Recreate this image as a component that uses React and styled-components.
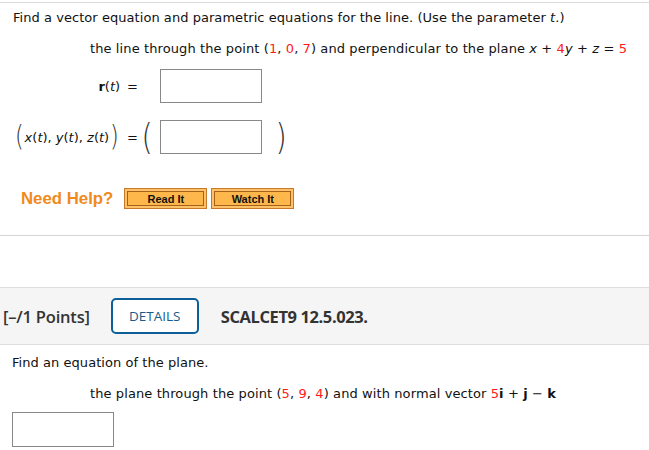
import React from "react";
import styled, { createGlobalStyle } from "styled-components";

const GlobalStyle = createGlobalStyle`
  html, body {
    margin: 0;
    padding: 0;
    background: #ffffff;
  }
  body {
    font-family: "DejaVu Sans", Verdana, sans-serif;
    font-size: 13px;
    color: #111;
  }
`;

const Page = styled.div`
  width: 649px;
  height: 450px;
  overflow: hidden;
  padding-top: 2px;
  box-sizing: border-box;
`;

const QuestionBody = styled.div`
  border-top: 1px solid #dcdcdc;
  padding: 7px 0 0 13px;
`;

const Prompt = styled.div`
  line-height: 16px;
  white-space: nowrap;
  letter-spacing: 0.05px;
`;

const Statement = styled.div`
  line-height: 16px;
  white-space: nowrap;
  letter-spacing: 0.1px;
  padding-left: ${(p) => p.$indent || 77}px;
  margin-top: ${(p) => p.$top || 15}px;
`;

const Red = styled.span`
  color: #ff1a1a;
`;

const Var = styled.i`
  font-style: italic;
`;

const Bold = styled.b`
  font-weight: bold;
`;

const AnswerGrid = styled.div`
  display: grid;
  grid-template-columns: 125px 22px auto;
  align-items: center;
  margin-top: 12px;
  row-gap: 14px;
`;

const Label = styled.div`
  display: flex;
  align-items: center;
  justify-content: flex-end;
  white-space: nowrap;
  height: ${(p) => p.$h || 34}px;
`;

const BigParen = styled.span`
  display: inline-block;
  font-family: "DejaVu Sans", sans-serif;
  font-weight: 200;
  font-size: ${(p) => p.$size || 26}px;
  line-height: 1;
  color: #333;
  transform: scaleX(0.8);
`;

const Equals = styled.span`
  margin-left: 7px;
`;

const OpenCell = styled.div`
  display: flex;
  align-items: center;
  justify-content: flex-end;
  padding-right: 6px;
`;

const ContentCell = styled.div`
  display: flex;
  align-items: center;
  gap: 12px;
`;

const AnswerBox = styled.div`
  width: ${(p) => p.$w || 100}px;
  height: ${(p) => p.$h || 32}px;
  margin-top: ${(p) => p.$top || 0}px;
  border: 1px solid #888;
  background: #fff;
`;

const HelpRow = styled.div`
  display: flex;
  align-items: center;
  gap: 4px;
  margin-top: 31px;
  padding-left: 8px;
`;

const HelpText = styled.span`
  font-family: "Liberation Sans", Arial, sans-serif;
  font-weight: bold;
  font-size: 16.8px;
  color: #f08a1c;
  margin-right: 7px;
`;

const HelpButton = styled.button`
  width: 83px;
  height: 21px;
  padding: 0;
  border: 1px solid #c9782a;
  background: #fdb74a;
  box-shadow: inset 0 0 0 2px #fdc266, inset 0 0 0 3px #a8611c;
  font-family: "Liberation Sans", Arial, sans-serif;
  font-weight: bold;
  font-size: 11px;
  color: #111;
  cursor: pointer;
`;

const Rule = styled.div`
  border-top: 1px solid #d4d4d4;
  margin-top: 26px;
`;

const HeaderBand = styled.div`
  margin-top: 51px;
  height: 56px;
  background: #f5f5f5;
  border-top: 1px solid #dedede;
  border-bottom: 1px solid #dedede;
  display: flex;
  align-items: center;
  padding-left: 3px;
  font-family: "Open Sans", "Noto Sans", sans-serif;
  color: #333;
`;

const Points = styled.span`
  font-weight: 600;
  font-size: 16.5px;
  letter-spacing: -0.2px;
  margin-right: 21px;
`;

const DetailsButton = styled.button`
  width: 88px;
  height: 36px;
  border: 2px solid #0c5f98;
  border-radius: 5px;
  background: #fff;
  font-family: "Open Sans", "Noto Sans", sans-serif;
  font-size: 13.5px;
  color: #1b5b8a;
  padding: 0;
  margin-right: 22px;
`;

const Code = styled.span`
  font-weight: 700;
  font-size: 16.5px;
  letter-spacing: -0.4px;
`;

const Question2 = styled.div`
  padding: 10px 0 0 12px;
`;

export default function App() {
  return (
    <Page>
      <GlobalStyle />
      <QuestionBody>
        <Prompt>
          Find a vector equation and parametric equations for the line. (Use
          the parameter <Var>t</Var>.)
        </Prompt>
        <Statement>
          the line through the point (<Red>1</Red>, <Red>0</Red>,{" "}
          <Red>7</Red>) and perpendicular to the plane <Var>x</Var> +{" "}
          <Red>4</Red>
          <Var>y</Var> + <Var>z</Var> = <Red>5</Red>
        </Statement>

        <AnswerGrid>
          <Label>
            <Bold>r</Bold>(<Var>t</Var>)<Equals>=</Equals>
          </Label>
          <div />
          <ContentCell>
            <AnswerBox $w={100} $h={32} />
          </ContentCell>

          <Label $h={40}>
            <BigParen $size={28}>(</BigParen>
            <Var>x</Var>(<Var>t</Var>),&nbsp;<Var>y</Var>(<Var>t</Var>),&nbsp;
            <Var>z</Var>(<Var>t</Var>)<BigParen $size={28}>)</BigParen>
            <Equals>=</Equals>
          </Label>
          <OpenCell>
            <BigParen $size={36}>(</BigParen>
          </OpenCell>
          <ContentCell>
            <AnswerBox $w={100} $h={32} />
            <BigParen $size={36}>)</BigParen>
          </ContentCell>
        </AnswerGrid>

        <HelpRow>
          <HelpText>Need Help?</HelpText>
          <HelpButton>Read It</HelpButton>
          <HelpButton>Watch It</HelpButton>
        </HelpRow>
      </QuestionBody>

      <Rule />

      <HeaderBand>
        <Points>[–/1 Points]</Points>
        <DetailsButton>DETAILS</DetailsButton>
        <Code>SCALCET9 12.5.023.</Code>
      </HeaderBand>

      <Question2>
        <Prompt>Find an equation of the plane.</Prompt>
        <Statement $indent={78} $top={15}>
          the plane through the point (<Red>5</Red>, <Red>9</Red>,{" "}
          <Red>4</Red>) and with normal vector <Red>5</Red>
          <Bold>i</Bold> + <Bold>j</Bold> − <Bold>k</Bold>
        </Statement>
        <AnswerBox $w={100} $h={33} $top={10} />
      </Question2>
    </Page>
  );
}
